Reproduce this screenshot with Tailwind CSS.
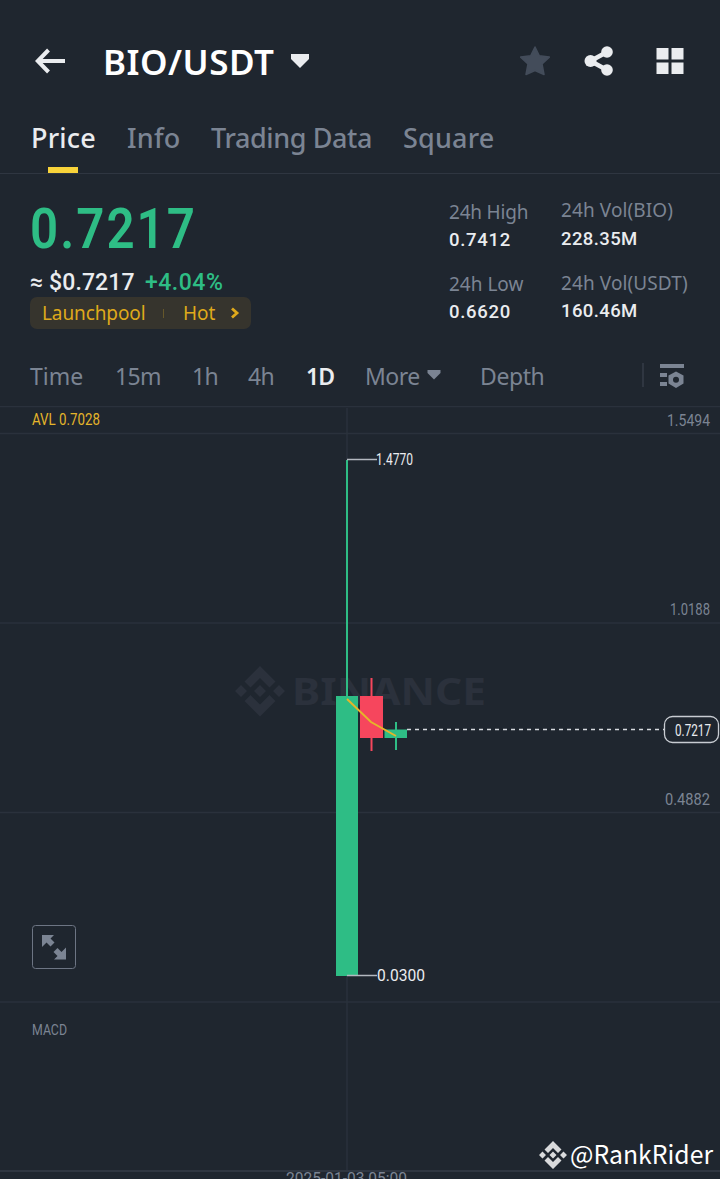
<!DOCTYPE html>
<html lang="en">
<head>
<meta charset="utf-8">
<title>BIO/USDT</title>
<script src="https://cdn.jsdelivr.net/npm/@tailwindcss/browser@4"></script>
</head>
<body class="bg-[#1f262f]">
<div class="w-[720px] h-[1179px] overflow-hidden bg-[#1f262f] flex flex-col font-['Noto_Sans',sans-serif] text-[#7b8493] whitespace-nowrap">

  <header class="h-[112px] pt-[37px] pl-[35px] pr-[36px] flex shrink-0">
    <svg class="w-[31px] h-[26px] mt-[11px]" viewBox="0 0 31 26" fill="none" stroke="#eaecef" stroke-width="4"><path d="M13.500 2 2.800 13l10.700 11M3 13h27"/></svg>
    <h1 class="ml-[37px] w-[173px] h-[50px] leading-[50px] text-[35px] font-semibold text-white tracking-[0.5px]">BIO/USDT</h1>
    <svg class="ml-[14px] mt-[16px] w-[20px] h-[16px]" viewBox="0 0 20 16"><path d="M1 1h18v5l-9 9-9-9z" fill="#eaecef"/></svg>
    <div class="ml-auto flex items-start pt-[7px]">
      <svg class="w-[32px] h-[34px]" viewBox="0 0 32 34"><path d="m15 3 4.300 8.800 10 1.300-7.300 6.900 2 10.500L15 26.500 6 30.500 8 20 .7 13.100l10-1.300z" fill="#434c5a" stroke="#434c5a" stroke-width="1.500" stroke-linejoin="round"/></svg>
      <svg class="ml-[32px] mr-px w-[31px] h-[34px]" viewBox="0 0 31 34" fill="#eaecef"><path d="M6.500 17 23 8M6.500 17 23 26" stroke="#eaecef" stroke-width="4.500"/><circle cx="6.500" cy="17" r="6"/><circle cx="23" cy="8" r="5.800"/><circle cx="23" cy="26" r="5.800"/></svg>
      <svg class="ml-[40px] w-[28px] h-[34px]" viewBox="0 0 28 34" fill="#eaecef"><path d="M.5 4h12v11.500H.5zM15.500 4h12v11.500h-12zM.5 18.500h12V30H.5zM15.500 18.500h12V30h-12z"/></svg>
    </div>
  </header>

  <nav class="h-[62px] shrink-0 border-b border-[#2f3641] pl-[31px] flex text-[27px] leading-[51px] font-medium">
    <div class="w-[96px] flex flex-col text-[#eaecef]"><span class="h-[55px] tracking-[0.2px]">Price</span><span class="ml-[17px] w-[30px] h-[6px] shrink-0 bg-[#f8d33a]"></span></div>
    <div class="w-[84px] tracking-[0.2px]">Info</div>
    <div class="w-[192px] tracking-[-0.4px]">Trading Data</div>
    <div class="tracking-[0.2px]">Square</div>
  </nav>

  <section class="h-[176px] shrink-0 flex">
    <div class="w-[449px] pl-[30px] pt-[24px]">
      <div class="w-fit origin-left scale-x-[0.88] h-[66px] leading-[62px] text-[56px] font-semibold font-[Roboto,sans-serif] text-[#2ebd85] tracking-[2.3px]">0.7217</div>
      <div class="h-[33px] leading-[37px] text-[23px] font-medium font-[Roboto,sans-serif] flex"><span class="w-[115px] tracking-[0.1px] text-[#eaecef]">≈ $0.7217</span><span class="tracking-[0.5px] text-[#2ebd85]">+4.04%</span></div>
      <div class="w-[221px] h-[32px] rounded-[7px] bg-[#36342d] text-[#dfa91b] text-[19px] leading-[32px] pl-[12px] flex items-center">
        <span class="w-[121px] tracking-[-0.1px]">Launchpool</span><span class="w-px h-[9px] bg-[#66572a]"></span><span class="ml-[19px] w-[47px]">Hot</span>
        <svg class="w-[10px] h-[12px]" viewBox="0 0 10 12" fill="none" stroke="#dfa91b" stroke-width="2.800"><path d="m2 1.500 5 4.500-5 4.500"/></svg>
      </div>
    </div>
    <div class="w-[112px] pt-[24px] text-[19px]">
      <div class="h-[28px] leading-[28px] tracking-[-0.2px]">24h High</div>
      <div class="h-[44px] leading-[29px] font-medium text-[18.5px] tracking-[0.7px] text-[#eaecef] font-[Roboto,sans-serif]">0.7412</div>
      <div class="h-[28px] leading-[28px]">24h Low</div>
      <div class="leading-[29px] font-medium text-[18.5px] tracking-[0.7px] text-[#eaecef] font-[Roboto,sans-serif]">0.6620</div>
    </div>
    <div class="pt-[22px] text-[19px]">
      <div class="h-[29px] leading-[28px] tracking-[0.1px]">24h Vol(BIO)</div>
      <div class="h-[44px] leading-[29px] font-medium text-[18.5px] tracking-[0.4px] text-[#eaecef] font-[Roboto,sans-serif]">228.35M</div>
      <div class="h-[28px] leading-[28px] tracking-[0.1px]">24h Vol(USDT)</div>
      <div class="leading-[29px] font-medium text-[18.5px] tracking-[0.4px] text-[#eaecef] font-[Roboto,sans-serif]">160.46M</div>
    </div>
  </section>

  <div class="h-[56px] shrink-0 pl-[30px] flex text-[23px] leading-[53px]">
    <span class="w-[85px]">Time</span><span class="w-[77px] tracking-[-0.6px]">15m</span><span class="w-[56px] tracking-[-0.6px]">1h</span><span class="w-[58px] tracking-[-0.6px]">4h</span><span class="w-[59px] font-semibold tracking-[-0.8px] text-[#eaecef]">1D</span><span class="w-[62px] tracking-[-0.5px]">More</span>
    <svg class="mt-[19px] w-[14px] h-[12px]" viewBox="0 0 14 12"><path d="M.5 1h13v3L7 10.500.5 4z" fill="#7b8493"/></svg>
    <span class="ml-[39px] tracking-[-0.4px]">Depth</span>
    <span class="ml-auto mt-[13px] w-[2px] h-[24px] bg-[#2f3641]"></span>
    <svg class="ml-[16px] mr-[36px] mt-[13px] w-[24px] h-[26px]" viewBox="0 0 24 26" fill="#7b8493"><path d="M0 1h24v4H0zM0 10h7v4H0zM0 19h7v4H0z"/><path fill-rule="evenodd" d="m16 8.500 7.500 4v8L16 25l-7.500-4.500v-8zM16 13.800a3 3 0 1 0 0 6 3 3 0 0 0 0-6z"/></svg>
  </div>

  <svg class="block shrink-0 w-[720px] h-[773px] font-[Roboto,sans-serif]" viewBox="0 406 720 773">
    <!-- grid -->
    <path d="M0 406.500H720M0 433.500H720M0 623H720M0 812.500H720M0 1002H720M347 408V1170" stroke="#2a313c" stroke-width="1.500"/>
    <path d="M0 1171H720" stroke="#363d48" stroke-width="1.500"/>
    <!-- watermark -->
    <g fill="#2b313c">
      <path d="m260 666 15.500 15.500-6 6L260 678l-9.500 9.500-6-6zM260 716.500l15.500-15.500-6-6-9.500 9.500-9.500-9.500-6 6zM235 691l6-6 6 6-6 6zM273 691l6-6 6 6-6 6zM254 691l6-6 6 6-6 6z"/>
      <text class="font-['Noto_Sans',sans-serif]" x="292" y="705" font-size="38" font-weight="700" textLength="194" lengthAdjust="spacingAndGlyphs">BINANCE</text>
    </g>
    <!-- candles -->
    <g fill="#2ebd85">
      <path d="M346 460h2v237h-2zM336 696h22v280h-22zM395 722h2v28h-2zM384.500 729.500h22.500v8.500h-22.500z"/>
      <path fill="#f6465d" d="M360 696h23v42h-23zM370.500 678h2v73h-2z"/>
    </g>
    <path d="M347 699 371 722 396 736" fill="none" stroke="#e5b52a" stroke-width="2"/>
    <path d="M347 459.500H377M347 975.500H377" stroke="#b3b8c0" stroke-width="1.500"/>
    <path d="M407 729.500H664" stroke="#d6d9de" stroke-width="1.300" stroke-dasharray="4 4"/>
    <rect x="664.500" y="716.500" width="54" height="26" rx="8" fill="#1f262f" stroke="#c8ccd2" stroke-width="1.300"/>
    <!-- labels -->
    <g font-size="17" fill="#7b8493">
      <text x="32" y="425" font-size="16" fill="#e5b52a" textLength="68" lengthAdjust="spacingAndGlyphs">AVL 0.7028</text>
      <text x="667" y="426" textLength="43" lengthAdjust="spacingAndGlyphs">1.5494</text>
      <text x="670" y="615" textLength="40" lengthAdjust="spacingAndGlyphs">1.0188</text>
      <text x="665" y="805" textLength="45" lengthAdjust="spacingAndGlyphs">0.4882</text>
      <text x="32" y="1035" font-size="15" textLength="35" lengthAdjust="spacingAndGlyphs">MACD</text>
      <text x="286" y="1184" textLength="121" lengthAdjust="spacingAndGlyphs">2025-01-03 05:00</text>
      <g fill="#eaecef">
        <text x="376" y="465" textLength="37" lengthAdjust="spacingAndGlyphs">1.4770</text>
        <text x="377" y="981" textLength="48" lengthAdjust="spacingAndGlyphs">0.0300</text>
        <text x="675" y="736" textLength="36" lengthAdjust="spacingAndGlyphs">0.7217</text>
      </g>
    </g>
    <!-- expand button -->
    <rect x="32.500" y="925.500" width="43" height="43" rx="3" fill="none" stroke="#6d7584"/>
    <path fill="#7b8493" d="M42 935h12l-3.500 3.500 4 4-4 4-4-4L42 947zM66 959.500H54l3.500-3.500-4-4 4-4 4 4 4.500-4.500z"/>
    <!-- author mark -->
    <path fill="#d9dadc" d="m553 1141 8.500 8.500-3.500 3.500-5-5-5 5-3.500-3.500zM553 1169l8.500-8.500-3.500-3.500-5 5-5-5-3.500 3.500zM539 1155l3.500-3.500 3.500 3.500-3.500 3.500zM560 1155l3.500-3.500 3.500 3.500-3.500 3.500zM549.500 1155l3.500-3.500 3.500 3.500-3.500 3.500z"/>
    <text class="font-['Noto_Sans_CJK_SC',sans-serif]" x="570" y="1164" font-size="25" font-weight="400" fill="#fff" textLength="143" lengthAdjust="spacingAndGlyphs">@RankRider</text>
  </svg>
</div>
</body>
</html>
